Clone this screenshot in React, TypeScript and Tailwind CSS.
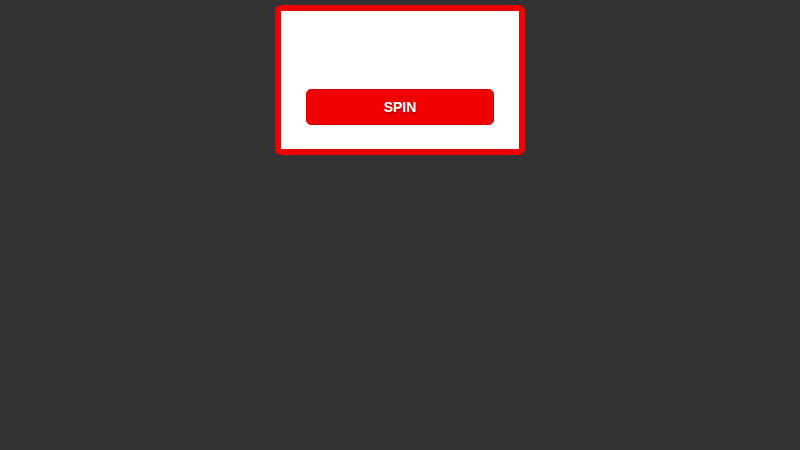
export default function App() {
  return (
    <div className="min-h-screen w-full bg-[#333333] flex justify-center pt-[5px]" style={{ fontFamily: '"Liberation Sans", Arial, sans-serif' }}>
      <div className="w-[250px] h-[150px] bg-white border-[6px] border-[#ee0000] rounded-[6px] px-[25px] pt-6 pb-6 flex flex-col">
        <div className="h-[54px]"></div>
        <button className="w-full h-9 bg-[#f00000] border border-[#cc0000] rounded-[5px] text-white font-bold text-sm [text-shadow:0_1px_2px_rgba(0,0,0,0.4)]">
          SPIN
        </button>
      </div>
    </div>
  );
}
